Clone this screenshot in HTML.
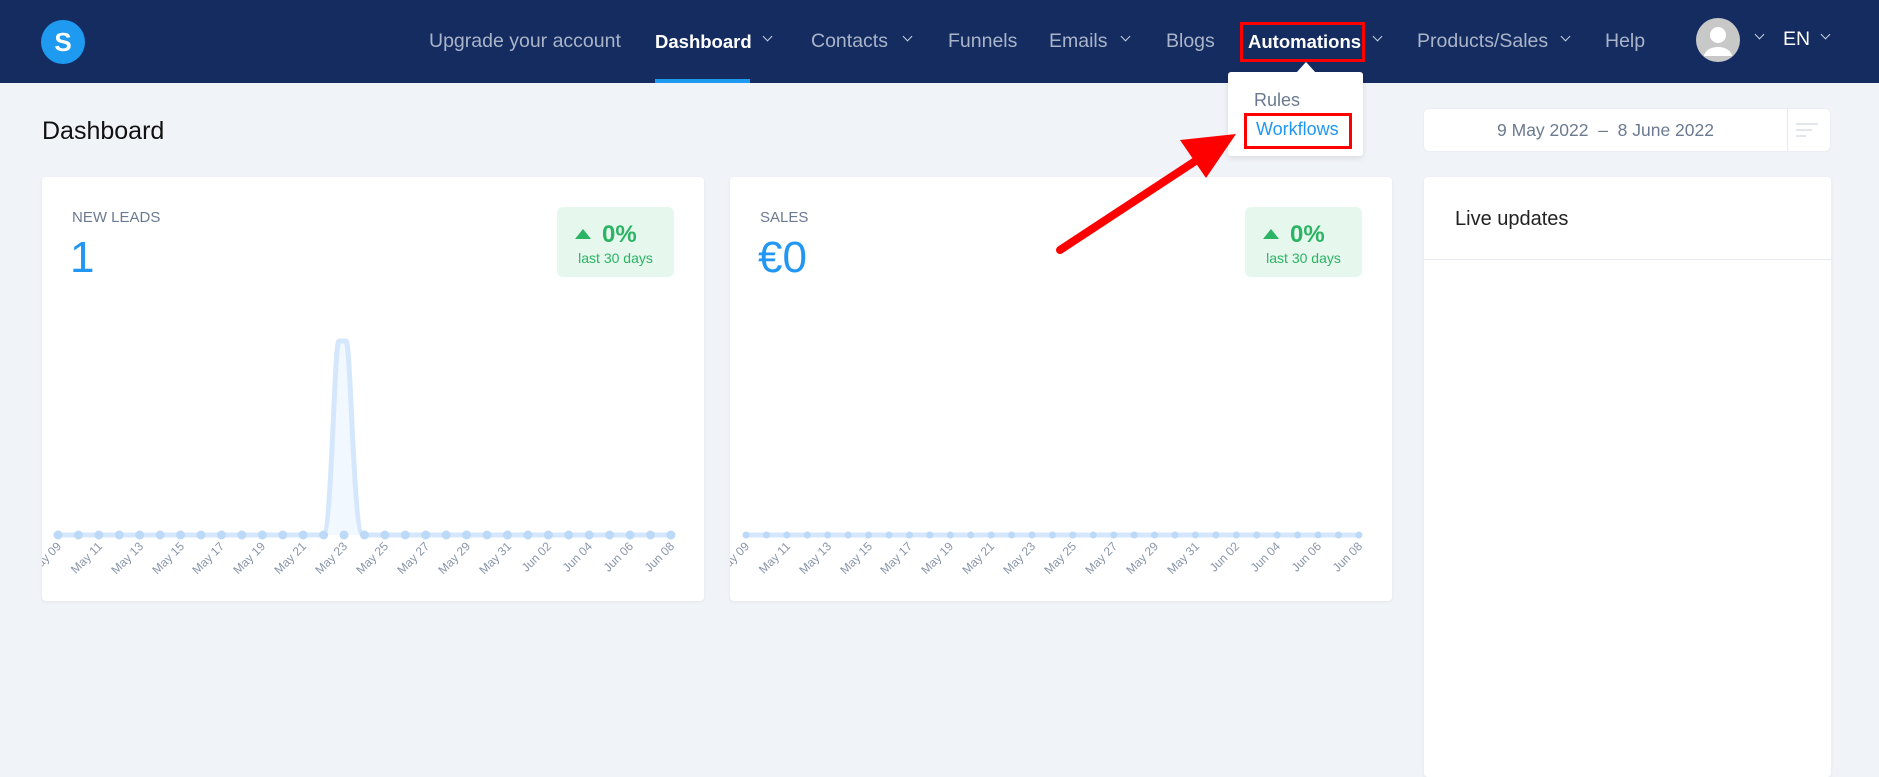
<!DOCTYPE html>
<html><head><meta charset="utf-8"><style>
*{margin:0;padding:0;box-sizing:border-box}
body{width:1879px;height:766px;overflow:hidden;background:#f0f3f8;font-family:"Liberation Sans",sans-serif;position:relative}
.nav{position:absolute;left:0;top:0;width:1879px;height:83px;background:#152c61}
.ni{position:absolute;top:30px;font-size:19.5px;color:#aab4c8;white-space:nowrap}
.ni.a{color:#fff;font-weight:bold;font-size:18.5px;top:31px}
.ch{position:absolute;top:33px;width:7px;height:7px;border-right:1.6px solid #c8d0de;border-bottom:1.6px solid #c8d0de;transform:rotate(45deg)}
.card{position:absolute;background:#fff;border-radius:4px;box-shadow:0 1px 3px rgba(0,0,0,.06);overflow:hidden}
.lbl{position:absolute;left:30px;top:32px;font-size:15px;color:#6b7a90}
.big{position:absolute;left:28px;top:56px;font-size:44px;color:#2196f3}
.badge{position:absolute;top:30px;width:117px;height:70px;background:#e6f7ee;border-radius:6px;color:#2bb463}
.badge .p{position:absolute;left:45px;top:14px;font-size:24px;font-weight:bold}
.badge .t{position:absolute;left:0;width:117px;text-align:center;top:43px;font-size:14px}
.badge .tri{position:absolute;left:18px;top:22px;width:0;height:0;border-left:8px solid transparent;border-right:8px solid transparent;border-bottom:10px solid #2bb463}
</style></head><body>
<div class="nav">
<svg style="position:absolute;left:41px;top:20px" width="44" height="44"><circle cx="22" cy="22" r="22" fill="#1e9bf0"/><text x="22" y="31" text-anchor="middle" font-family="Liberation Sans" font-weight="bold" font-size="26" fill="#fff">S</text></svg>
<div class="ni" style="left:429px">Upgrade your account</div>
<div class="ni a" style="left:655px">Dashboard</div><div class="ch" style="left:764px"></div>
<div style="position:absolute;left:655px;top:79px;width:95px;height:4px;background:#1e9bf0"></div>
<div class="ni" style="left:811px">Contacts</div><div class="ch" style="left:904px"></div>
<div class="ni" style="left:948px">Funnels</div>
<div class="ni" style="left:1049px">Emails</div><div class="ch" style="left:1122px"></div>
<div class="ni" style="left:1166px">Blogs</div>
<div class="ni a" style="left:1248px">Automations</div>
<div style="position:absolute;left:1240px;top:22px;width:125px;height:40px;border:3px solid #f00"></div>
<div class="ch" style="left:1374px"></div>
<div class="ni" style="left:1417px">Products/Sales</div><div class="ch" style="left:1562px"></div>
<div class="ni" style="left:1605px">Help</div>
<svg style="position:absolute;left:1696px;top:18px" width="44" height="44"><circle cx="22" cy="22" r="22" fill="#c8c8c8"/><circle cx="22" cy="17" r="8" fill="#fff"/><path d="M8 38 C10 26 34 26 36 38 Z" fill="#fff"/></svg>
<div class="ch" style="left:1756px;top:31px"></div>
<div class="ni" style="left:1783px;top:28px;color:#fff">EN</div><div class="ch" style="left:1822px;top:31px"></div>
</div>
<!-- dropdown -->
<div style="position:absolute;left:1228px;top:72px;width:135px;height:84px;background:#fff;border-radius:3px;box-shadow:0 2px 6px rgba(0,0,0,.1)"></div>
<div style="position:absolute;left:1296px;top:62px;width:0;height:0;border-left:10px solid transparent;border-right:10px solid transparent;border-bottom:11px solid #fff"></div>
<div style="position:absolute;left:1254px;top:90px;font-size:18px;color:#6b7a90">Rules</div>
<div style="position:absolute;left:1256px;top:119px;font-size:18px;color:#2196f3">Workflows</div>
<div style="position:absolute;left:1244px;top:113px;width:108px;height:36px;border:3px solid #f00"></div>

<div style="position:absolute;left:42px;top:117px;font-size:25px;color:#111">Dashboard</div>
<div style="position:absolute;left:1424px;top:109px;width:406px;height:42px;background:#fff;border-radius:5px;box-shadow:0 0 2px rgba(0,0,0,.06)">
<div style="position:absolute;left:0;width:363px;text-align:center;top:11px;font-size:17.5px;color:#6b7a90">9 May 2022 &nbsp;–&nbsp; 8 June 2022</div>
<div style="position:absolute;left:363px;top:0;width:1px;height:42px;background:#e6e9ee"></div>
<div style="position:absolute;left:372px;top:14px;width:22px;height:2px;background:#e3e6ea"></div>
<div style="position:absolute;left:372px;top:20px;width:16px;height:2px;background:#e3e6ea"></div>
<div style="position:absolute;left:372px;top:26px;width:10px;height:2px;background:#e3e6ea"></div>
</div>

<div class="card" style="left:42px;top:177px;width:662px;height:424px">
<div class="lbl">NEW LEADS</div><div class="big">1</div>
<div class="badge" style="left:515px"><div class="tri"></div><div class="p">0%</div><div class="t">last 30 days</div></div>
<svg width="662" height="424" style="position:absolute;left:0;top:0" font-family="Liberation Sans" font-size="12" fill="#8a96aa">
<path d="M16,358 L281,358 C290,358 292,164 297,164 L304,164 C309,164 311,358 321,358 Z" fill="#f2f8ff"/>
<path d="M16,358 L281,358 C290,358 292,164 297,164 L304,164 C309,164 311,358 321,358 L628,358" fill="none" stroke="#d4e7fc" stroke-width="5"/>
<line x1="16" y1="358" x2="629" y2="358" stroke="#bcdaf7" stroke-width="9" stroke-linecap="round" stroke-dasharray="0 20.43"/>
<g id="lb">
<text transform="translate(20,370) rotate(-45)" text-anchor="end">May 09</text>
<text transform="translate(61,370) rotate(-45)" text-anchor="end">May 11</text>
<text transform="translate(102,370) rotate(-45)" text-anchor="end">May 13</text>
<text transform="translate(143,370) rotate(-45)" text-anchor="end">May 15</text>
<text transform="translate(183,370) rotate(-45)" text-anchor="end">May 17</text>
<text transform="translate(224,370) rotate(-45)" text-anchor="end">May 19</text>
<text transform="translate(265,370) rotate(-45)" text-anchor="end">May 21</text>
<text transform="translate(306,370) rotate(-45)" text-anchor="end">May 23</text>
<text transform="translate(347,370) rotate(-45)" text-anchor="end">May 25</text>
<text transform="translate(388,370) rotate(-45)" text-anchor="end">May 27</text>
<text transform="translate(429,370) rotate(-45)" text-anchor="end">May 29</text>
<text transform="translate(470,370) rotate(-45)" text-anchor="end">May 31</text>
<text transform="translate(510,370) rotate(-45)" text-anchor="end">Jun 02</text>
<text transform="translate(551,370) rotate(-45)" text-anchor="end">Jun 04</text>
<text transform="translate(592,370) rotate(-45)" text-anchor="end">Jun 06</text>
<text transform="translate(633,370) rotate(-45)" text-anchor="end">Jun 08</text>
</g></svg>
</div>

<div class="card" style="left:730px;top:177px;width:662px;height:424px">
<div class="lbl">SALES</div><div class="big">€0</div>
<div class="badge" style="left:515px"><div class="tri"></div><div class="p">0%</div><div class="t">last 30 days</div></div>
<svg width="662" height="424" style="position:absolute;left:0;top:0" font-family="Liberation Sans" font-size="12" fill="#8a96aa">
<line x1="16" y1="358" x2="629" y2="358" stroke="#d4e7fc" stroke-width="5"/>
<line x1="16" y1="358" x2="629" y2="358" stroke="#bcdaf7" stroke-width="7" stroke-linecap="round" stroke-dasharray="0 20.43"/>
<use href="#lb"/>
</svg>
</div>

<div class="card" style="left:1424px;top:177px;width:407px;height:600px">
<div style="position:absolute;left:31px;top:31px;font-size:20px;color:#222">Live updates</div>
<div style="position:absolute;left:0;top:82px;width:407px;height:1px;background:#e6e9ee"></div>
</div>

<svg width="1879" height="766" style="position:absolute;left:0;top:0;pointer-events:none">
<line x1="1060" y1="250" x2="1200" y2="158" stroke="#f00" stroke-width="8" stroke-linecap="round"/>
<polygon points="1236,134 1180,140 1206,178" fill="#f00"/>
</svg>
</body></html>
